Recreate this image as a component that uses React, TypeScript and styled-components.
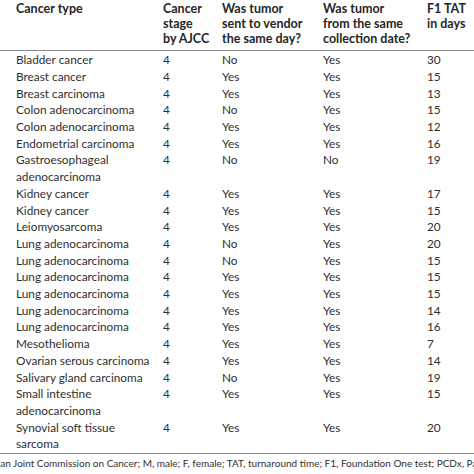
import React from "react";
import styled, { createGlobalStyle } from "styled-components";

const Global = createGlobalStyle`
  html, body { margin: 0; padding: 0; background: #ffffff; }
  body { width: 474px; height: 474px; overflow: hidden; }
`;

const Page = styled.div`
  width: 474px;
  height: 474px;
  overflow: hidden;
  font-family: Lato, "Open Sans", sans-serif;
  color: #2f2f2f;
  background: #fff;
`;

const cols = "147px 59px 101px 104px 1fr";

const HeaderRow = styled.div`
  display: grid;
  grid-template-columns: ${cols};
  padding: 1px 0 4px 16px;
  border-bottom: 1.5px solid #8a8a8a;
  font-weight: 700;
  font-size: 12.5px;
  line-height: 15px;
  color: #262626;
  white-space: nowrap;
`;

const Body = styled.div`
  padding-top: 1.2px;
  border-bottom: 1.5px solid #8a8a8a;
`;

const Row = styled.div`
  display: grid;
  grid-template-columns: ${cols};
  padding-left: 16px;
  font-size: 11.8px;
  line-height: 16.7px;
  white-space: nowrap;
`;

const Cell = styled.div`
  white-space: pre-line;
`;

const Footer = styled.div`
  font-size: 10px;
  line-height: 16px;
  padding-top: 1px;
  white-space: nowrap;
  color: #2f2f2f;
`;

const FooterText = styled.span<{ $shift: number }>`
  display: inline-block;
  margin-left: ${(p) => p.$shift}px;
`;

const rows: [string, string, string, string, string][] = [
  ["Bladder cancer", "4", "No", "Yes", "30"],
  ["Breast cancer", "4", "Yes", "Yes", "15"],
  ["Breast carcinoma", "4", "Yes", "Yes", "13"],
  ["Colon adenocarcinoma", "4", "No", "Yes", "15"],
  ["Colon adenocarcinoma", "4", "Yes", "Yes", "12"],
  ["Endometrial carcinoma", "4", "Yes", "Yes", "16"],
  ["Gastroesophageal\nadenocarcinoma", "4", "No", "No", "19"],
  ["Kidney cancer", "4", "Yes", "Yes", "17"],
  ["Kidney cancer", "4", "Yes", "Yes", "15"],
  ["Leiomyosarcoma", "4", "Yes", "Yes", "20"],
  ["Lung adenocarcinoma", "4", "No", "Yes", "20"],
  ["Lung adenocarcinoma", "4", "No", "Yes", "15"],
  ["Lung adenocarcinoma", "4", "Yes", "Yes", "15"],
  ["Lung adenocarcinoma", "4", "Yes", "Yes", "15"],
  ["Lung adenocarcinoma", "4", "Yes", "Yes", "14"],
  ["Lung adenocarcinoma", "4", "Yes", "Yes", "16"],
  ["Mesothelioma", "4", "Yes", "Yes", "7"],
  ["Ovarian serous carcinoma", "4", "Yes", "Yes", "14"],
  ["Salivary gland carcinoma", "4", "No", "Yes", "19"],
  ["Small intestine\nadenocarcinoma", "4", "Yes", "Yes", "15"],
  ["Synovial soft tissue\nsarcoma", "4", "Yes", "Yes", "20"],
];

export default function App() {
  return (
    <Page>
      <Global />
      <HeaderRow>
        <Cell>Cancer type</Cell>
        <Cell>{"Cancer\nstage\nby AJCC"}</Cell>
        <Cell>{"Was tumor\nsent to vendor\nthe same day?"}</Cell>
        <Cell>{"Was tumor\nfrom the same\ncollection date?"}</Cell>
        <Cell>{"F1 TAT\nin days"}</Cell>
      </HeaderRow>
      <Body>
        {rows.map((r, i) => (
          <Row key={i}>
            {r.map((c, j) => (
              <Cell key={j}>{c}</Cell>
            ))}
          </Row>
        ))}
      </Body>
      <Footer>
        <FooterText $shift={-125}>
          Abbreviations: AJCC, American Joint Commission on Cancer; M, male; F, female; TAT, turnaround time; F1, Foundation One test; PCDx, Paradigm Cancer Diagnostics.
        </FooterText>
      </Footer>
    </Page>
  );
}
